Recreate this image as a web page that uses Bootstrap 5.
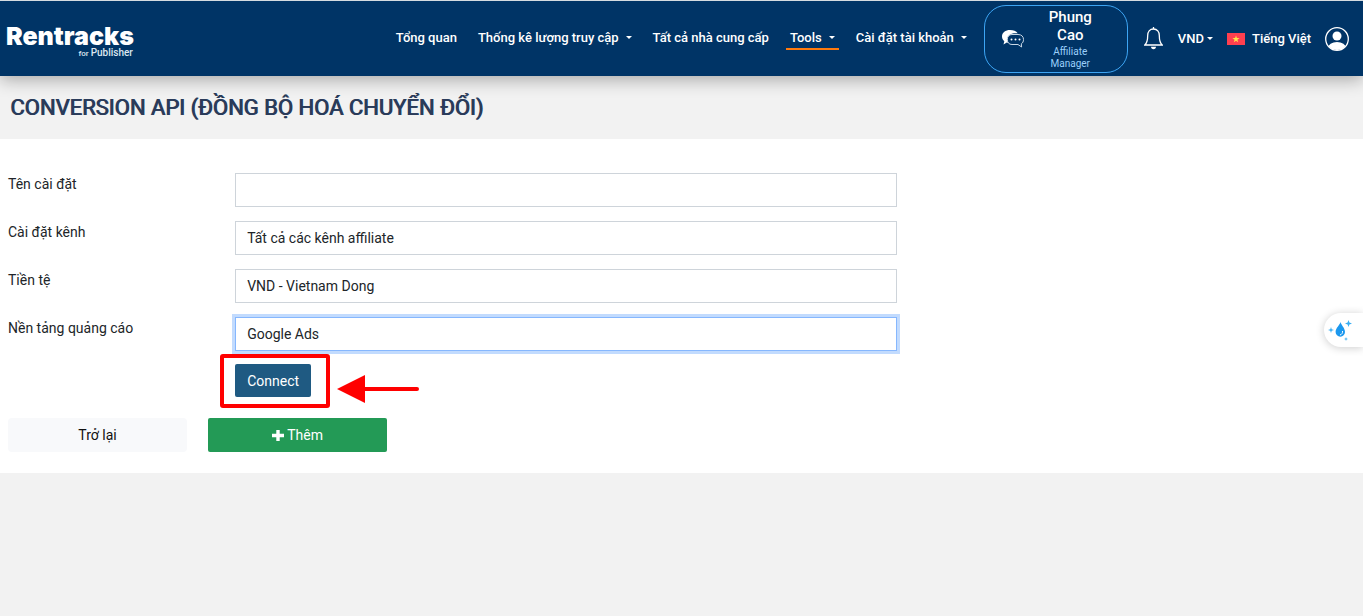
<!DOCTYPE html>
<html lang="vi">
<head>
<meta charset="utf-8">
<meta name="viewport" content="width=device-width, initial-scale=1">
<title>Rentracks for Publisher</title>
<link href="https://cdn.jsdelivr.net/npm/bootstrap@5.3.0/dist/css/bootstrap.min.css" rel="stylesheet">
<style>
body { background: #f2f2f2; font-family: Roboto, "Noto Sans", sans-serif; font-size: 14px; color: #212529; overflow-x: hidden; }
.topbar { background: #003466; border-top: 1px solid #d5dbe0; min-height: 76px; padding: 0 14px 0 6px; box-shadow: 0 4px 16px rgba(0,0,0,.3); position: relative; font-size: 13px; font-weight: 500; }
.topbar a { color: #fff; text-decoration: none; white-space: nowrap; }
.brand { text-align: right; padding-top: 8px; }
.brand-main { font: 900 25px/22px Inter, sans-serif; display: block; }
.brand-sub { font: 500 10px/12px Roboto, sans-serif; color: #dce6f0; gap: 2px; padding-right: 1px; }
.brand-sub small { font-size: 8px; }
.menu { gap: 13px; }
.menu .nav-link { padding: 0 4px; line-height: 20px; border-bottom: 2px solid transparent; }
.menu .nav-link.active { border-color: #ff7a0e; }
.menu .dropdown-toggle::after { margin-left: 7px; border-width: 3px 3px 0; vertical-align: 3px; }
.manager { border: 1px solid #3da5f4; border-radius: 22px; width: 144px; height: 68px; margin-left: 13px; padding: 1px 35px 0 16px; }
.manager-name { font-size: 15px; line-height: 18px; margin-bottom: 2px; }
.manager-role { font-size: 10px; line-height: 12px; color: #9bd0fb; font-weight: 400; }
.currency { margin: 0 14px 0 15px; }
.currency.dropdown-toggle::after { margin-left: 3px; border-width: 3px 3px 0; vertical-align: 3px; }
.language { gap: 7px; margin-right: 14px; }
.page-title { font-size: 22px; line-height: 26px; font-weight: 400; text-shadow: 1px 0 currentColor; color: #2a3b5a; padding: 19px 10px 18px; margin: 0; }
.panel { padding: 34px 0 21px; }
.field { margin-bottom: 14px; }
.field.before-action { margin-bottom: 13px; }
.field > div { padding: 0 12px 0 8px; }
.field label { line-height: 22px; }
.form-control, .btn { height: 34px; font-size: 14px; line-height: 20px; padding: 6px 12px; }
.form-control { border-color: #ced4da; border-radius: 0; color: #212529; }
select.form-control { padding-left: 11px; }
.form-control.current, .form-control:focus { border-color: #86b7fe; box-shadow: 0 0 0 3px #c2dbfe; }
.btn { border: 0; border-radius: 2px; }
.btn-connect { height: 33px; }
.btn-connect, .btn-connect:hover { background: #1f5a82; color: #fff; }
.btn-add, .btn-add:hover { background: #239a56; color: #fff; }
.btn-back { background: #f8f9fb; border-radius: 4px; color: #111; }
.actions { gap: 21px; padding: 0 8px; margin-top: 21px; }
.actions .btn { width: 179px; }
.marked { position: relative; }
.mark-frame { position: absolute; inset: -10px -19px -11px -15px; border: 4px solid #f00; border-radius: 3px; pointer-events: none; }
.mark-arrow { position: absolute; left: 102px; top: 11px; }
.assist { position: fixed; right: 0; top: 313px; width: 39px; height: 34px; border: 0; border-radius: 17px 0 0 17px; background: #fff; box-shadow: 0 1px 8px rgba(0,0,0,.2); padding: 0; }
</style>
</head>
<body>
<header class="topbar d-flex align-items-center">
  <a class="brand" href="#"><span class="brand-main">Rentracks</span><span class="brand-sub d-flex justify-content-end align-items-baseline"><small>for</small><span>Publisher</span></span></a>
  <nav class="ms-auto" aria-label="Menu">
    <ul class="menu list-unstyled d-flex mb-0">
      <li><a class="nav-link" href="#">Tổng quan</a></li>
      <li><a class="nav-link dropdown-toggle" href="#">Thống kê lượng truy cập</a></li>
      <li><a class="nav-link" href="#">Tất cả nhà cung cấp</a></li>
      <li><a class="nav-link dropdown-toggle active" href="#">Tools</a></li>
      <li><a class="nav-link dropdown-toggle" href="#">Cài đặt tài khoản</a></li>
    </ul>
  </nav>
  <a class="manager d-flex align-items-center justify-content-between" href="#">
    <svg width="24" height="20" viewBox="0 0 24 20" aria-hidden="true">
      <path d="M9 1C4.500 1 1 3.500 1 7.500c0 2 1 3.700 2.300 4.800L2.500 15.500 5.800 13.500l2 .5V9c0-3 2-4.500 5-4.800h4C15 2.200 12.500 1 9 1z" fill="#fff"/>
      <path d="M11 5.500h6c3.500 0 5.500 2 5.500 5 0 2-.7 3.500-2.200 4.300l.3 3.200-3.600-2.500h-6c-3 0-4.700-2-4.700-5s1.700-5 4.700-5z" fill="#003466" stroke="#c9d8e6" stroke-width="1"/>
      <g fill="#fff"><circle cx="10.500" cy="10.500" r="1"/><circle cx="14.500" cy="10.500" r="1"/><circle cx="18.500" cy="10.500" r="1"/></g>
    </svg>
    <span class="text-center"><span class="manager-name d-block">Phung<br>Cao</span><span class="manager-role d-block">Affiliate<br>Manager</span></span>
  </a>
  <a class="ms-3 d-flex" href="#" aria-label="Thông báo">
    <svg width="19" height="23" viewBox="0 0 19 23" fill="none" stroke="#fff" stroke-width="1.300" aria-hidden="true">
      <path d="M9.500 2C5.700 2 3.700 5 3.700 8.500c0 5-.7 7.500-2.900 9.500h17.400c-2.200-2-2.900-4.500-2.900-9.500C15.300 5 13.300 2 9.500 2z"/>
      <path d="M9.500 0v2"/><path d="M7 19.700h5c0 1.600-1 2.500-2.500 2.500S7 21.300 7 19.700z" fill="#fff" stroke="none"/>
    </svg>
  </a>
  <a class="currency dropdown-toggle" href="#">VND</a>
  <a class="language d-flex align-items-center" href="#">
    <svg width="18" height="12" viewBox="0 0 18 12" aria-hidden="true"><path fill="#ff3f4f" d="M0 0h18v12H0z"/><path fill="#ffe24a" d="M9 2.500l.9 2.600h2.700l-2.200 1.600.8 2.600L9 7.700 6.800 9.300l.8-2.600-2.200-1.600h2.700z"/></svg>
    Tiếng Việt
  </a>
  <a class="d-flex" href="#" aria-label="Tài khoản">
    <svg width="24" height="24" viewBox="0 0 24 24" aria-hidden="true">
      <defs><clipPath id="face"><circle cx="12" cy="12" r="11"/></clipPath></defs>
      <g clip-path="url(#face)" fill="#fff"><circle cx="12" cy="9" r="4.500"/><ellipse cx="12" cy="21" rx="9" ry="6"/></g>
      <circle cx="12" cy="12" r="11.300" fill="none" stroke="#fff" stroke-width="1.300"/>
    </svg>
  </a>
</header>

<main>
  <h1 class="page-title">CONVERSION API (ĐỒNG BỘ HOÁ CHUYỂN ĐỔI)</h1>
  <form class="panel bg-white">
    <div class="field row g-0"><div class="col-2"><label for="name">Tên cài đặt</label></div><div class="col-6"><input class="form-control" id="name" type="text"></div></div>
    <div class="field row g-0"><div class="col-2"><label for="channel">Cài đặt kênh</label></div><div class="col-6"><select class="form-control" id="channel"><option>Tất cả các kênh affiliate</option></select></div></div>
    <div class="field row g-0"><div class="col-2"><label for="money">Tiền tệ</label></div><div class="col-6"><select class="form-control" id="money"><option>VND - Vietnam Dong</option></select></div></div>
    <div class="field before-action row g-0"><div class="col-2"><label for="platform">Nền tảng quảng cáo</label></div><div class="col-6"><select class="form-control current" id="platform"><option>Google Ads</option></select></div></div>
    <div class="field row g-0"><div class="col-6 offset-2">
      <div class="marked d-inline-block">
        <button class="btn btn-connect d-block" type="button">Connect</button>
        <span class="mark-frame"></span>
        <svg class="mark-arrow" width="83" height="28" viewBox="0 0 83 28" aria-hidden="true"><path d="M0 14 28 0v28z" fill="#f00"/><path d="M26 14h54" stroke="#f00" stroke-width="4" stroke-linecap="round"/></svg>
      </div>
    </div></div>
    <div class="actions d-flex">
      <button class="btn btn-back" type="button">Trở lại</button>
      <button class="btn btn-add" type="submit"><svg width="12" height="12" viewBox="0 0 12 12" aria-hidden="true"><path d="M6 0v11M0 5.500h12" stroke="#fff" stroke-width="3.400"/></svg> Thêm</button>
    </div>
  </form>
</main>

<button class="assist" type="button" aria-label="Trợ lý">
  <svg class="d-block" width="39" height="34" viewBox="0 0 39 34" aria-hidden="true">
    <path d="M16.500 9c.7 3 4.500 6 4.500 10a4.700 4.700 0 0 1-9.400 0c0-4 4.200-7 4.900-10z" fill="#1c98ee"/><path d="M18.500 18c.3 2-.7 3.500-2.500 4" stroke="#fff" fill="none"/>
    <path d="M24.500 7l.9 2.600 2.600.9-2.600.9-.9 2.600-.9-2.600-2.600-.9 2.600-.9zM7 14l.7 2.300 2.300.7-2.300.7L7 20l-.7-2.300L4 17l2.300-.7zM22 24l.5 1.500 1.500.5-1.500.5L22 28l-.5-1.500L20 26l1.500-.5z" fill="#3aaef2"/>
  </svg>
</button>
<script src="https://cdn.jsdelivr.net/npm/bootstrap@5.3.0/dist/js/bootstrap.bundle.min.js"></script>
</body>
</html>
